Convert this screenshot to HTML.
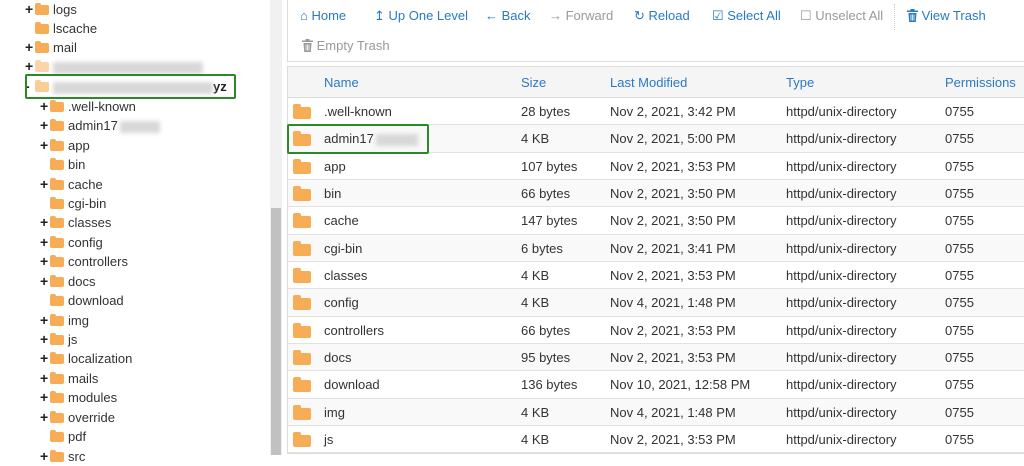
<!DOCTYPE html>
<html><head><meta charset="utf-8"><style>
*{margin:0;padding:0;box-sizing:border-box}
body{width:1024px;height:455px;overflow:hidden;background:#fff;font-family:"Liberation Sans",sans-serif;position:relative}
.tree{position:absolute;left:0;top:0;width:270px;height:455px;font-size:13px;color:#333}
.tr{position:absolute;height:19px;line-height:19px;white-space:nowrap}
.pl{display:inline-block;width:10px;font-weight:bold;font-size:14px;color:#222}
.fd{display:inline-block;width:14px;height:10px;background:#f6ad55;border-radius:2px;position:relative;vertical-align:-1px;margin-right:4px}
.fd:before{content:"";position:absolute;left:0;top:-2px;width:6px;height:4px;background:#f6ad55;border-radius:2px 2px 0 0}
.blur{display:inline-block;height:12px;background:#d8d8d8;filter:blur(2px);vertical-align:middle}
.sb{position:absolute;left:270px;top:0;width:12px;height:455px;background:#f1f1f1}
.th{position:absolute;left:271px;top:208px;width:10px;height:247px;background:#c1c1c1}
.tb{position:absolute;left:287px;top:0;width:740px;height:62px;border:1px solid #ddd;border-top:none;font-size:13px;color:#2a79c4}
.tb span{position:absolute;top:8px;white-space:nowrap}
.tb svg{vertical-align:-2px}
.dis{color:#999}
.tab{position:absolute;left:287px;top:66px;width:740px;border:1px solid #ddd;border-right:none;font-size:13px;color:#333}
.hd{height:31px;line-height:31px;background:#f5f5f5;border-bottom:1px solid #ddd;color:#2a79c4;position:relative}
.r{height:27.35px;line-height:27px;border-bottom:1px solid #e2e2e2;position:relative}
.r:nth-child(even){background:#f9f9f9}
.c{position:absolute;top:0;white-space:nowrap}
.bf{position:absolute;left:5px;top:9px;width:18px;height:12px;background:#f6ad55;border-radius:2px}
.bf:before{content:"";position:absolute;left:0;top:-3px;width:8px;height:4px;background:#f6ad55;border-radius:2px 2px 0 0}
</style></head><body>
<div class="tree">
<div class="tr" style="left:25px;top:0"><span class="pl">+</span><span class="fd"></span>logs</div>
<div class="tr" style="left:35px;top:19px"><span class="fd"></span>lscache</div>
<div class="tr" style="left:25px;top:38px"><span class="pl">+</span><span class="fd"></span>mail</div>
<div class="tr" style="left:25px;top:57px"><span class="pl">+</span><span class="fd" style="opacity:.5"></span><span class="blur" style="width:150px"></span></div>
<div class="tr" style="left:25px;top:77px"><span class="pl">-</span><span class="fd" style="opacity:.6"></span><span class="blur" style="width:160px"></span><b style="color:#222">yz</b></div>
<div style="position:absolute;left:25px;top:74px;width:211px;height:25px;border:2px solid #2a8a2a;border-radius:2px"></div>
<div class="tr" style="left:40px;top:97px"><span class="pl">+</span><span class="fd"></span>.well-known</div>
<div class="tr" style="left:40px;top:116px"><span class="pl">+</span><span class="fd"></span>admin17<span class="blur" style="width:40px;margin-left:2px"></span></div>
<div class="tr" style="left:40px;top:136px"><span class="pl">+</span><span class="fd"></span>app</div>
<div class="tr" style="left:50px;top:155px"><span class="fd"></span>bin</div>
<div class="tr" style="left:40px;top:175px"><span class="pl">+</span><span class="fd"></span>cache</div>
<div class="tr" style="left:50px;top:194px"><span class="fd"></span>cgi-bin</div>
<div class="tr" style="left:40px;top:213px"><span class="pl">+</span><span class="fd"></span>classes</div>
<div class="tr" style="left:40px;top:233px"><span class="pl">+</span><span class="fd"></span>config</div>
<div class="tr" style="left:40px;top:252px"><span class="pl">+</span><span class="fd"></span>controllers</div>
<div class="tr" style="left:40px;top:272px"><span class="pl">+</span><span class="fd"></span>docs</div>
<div class="tr" style="left:50px;top:291px"><span class="fd"></span>download</div>
<div class="tr" style="left:40px;top:311px"><span class="pl">+</span><span class="fd"></span>img</div>
<div class="tr" style="left:40px;top:330px"><span class="pl">+</span><span class="fd"></span>js</div>
<div class="tr" style="left:40px;top:349px"><span class="pl">+</span><span class="fd"></span>localization</div>
<div class="tr" style="left:40px;top:369px"><span class="pl">+</span><span class="fd"></span>mails</div>
<div class="tr" style="left:40px;top:388px"><span class="pl">+</span><span class="fd"></span>modules</div>
<div class="tr" style="left:40px;top:408px"><span class="pl">+</span><span class="fd"></span>override</div>
<div class="tr" style="left:50px;top:427px"><span class="fd"></span>pdf</div>
<div class="tr" style="left:40px;top:447px"><span class="pl">+</span><span class="fd"></span>src</div>
</div>
<div class="sb"></div><div class="th"></div>
<div class="tb">
<span style="left:12px">⌂ Home</span>
<span style="left:86px">↥ Up One Level</span>
<span style="left:197px">← Back</span>
<span style="left:261px" class="dis">→ Forward</span>
<span style="left:346px">↻ Reload</span>
<span style="left:424px">☑ Select All</span>
<span style="left:512px" class="dis">☐ Unselect All</span>
<span style="left:606px;top:4px;height:26px;border-left:1px dotted #ccc"></span>
<span style="left:619px"><svg width="11" height="13" viewBox="0 0 11 13"><rect x="0" y="1.5" width="11" height="1.5" fill="#2a79c4"/><rect x="3.5" y="0" width="4" height="2" fill="#2a79c4"/><path d="M1.5 4h8l-.7 9h-6.6z" fill="#2a79c4"/><path d="M4 5.5v6M5.5 5.5v6M7 5.5v6" stroke="#fff" stroke-width=".8"/></svg> View Trash</span>
<span style="left:14px;top:38px" class="dis"><svg width="11" height="13" viewBox="0 0 11 13"><rect x="0" y="1.5" width="11" height="1.5" fill="#999"/><rect x="3.5" y="0" width="4" height="2" fill="#999"/><path d="M1.5 4h8l-.7 9h-6.6z" fill="#999"/><path d="M4 5.5v6M5.5 5.5v6M7 5.5v6" stroke="#fff" stroke-width=".8"/></svg> Empty Trash</span>
</div>
<div class="tab">
<div class="hd"><span class="c" style="left:36px">Name</span><span class="c" style="left:233px">Size</span><span class="c" style="left:322px">Last Modified</span><span class="c" style="left:498px">Type</span><span class="c" style="left:657px">Permissions</span></div>
<div id="rows"></div>
</div>
<div style="position:absolute;left:287px;top:124px;width:142px;height:30px;border:2px solid #2a8a2a;border-radius:2px"></div>
<script>
var d=[[".well-known","28 bytes","Nov 2, 2021, 3:42 PM"],["admin17","4 KB","Nov 2, 2021, 5:00 PM"],["app","107 bytes","Nov 2, 2021, 3:53 PM"],["bin","66 bytes","Nov 2, 2021, 3:50 PM"],["cache","147 bytes","Nov 2, 2021, 3:50 PM"],["cgi-bin","6 bytes","Nov 2, 2021, 3:41 PM"],["classes","4 KB","Nov 2, 2021, 3:53 PM"],["config","4 KB","Nov 4, 2021, 1:48 PM"],["controllers","66 bytes","Nov 2, 2021, 3:53 PM"],["docs","95 bytes","Nov 2, 2021, 3:53 PM"],["download","136 bytes","Nov 10, 2021, 12:58 PM"],["img","4 KB","Nov 4, 2021, 1:48 PM"],["js","4 KB","Nov 2, 2021, 3:53 PM"]];
var h="";d.forEach(function(r,i){h+='<div class="r"><span class="bf"></span><span class="c" style="left:36px">'+r[0]+(i==1?'<span class="blur" style="width:42px;margin-left:2px"></span>':'')+'</span><span class="c" style="left:233px">'+r[1]+'</span><span class="c" style="left:322px">'+r[2]+'</span><span class="c" style="left:498px">httpd/unix-directory</span><span class="c" style="left:657px">0755</span></div>'});
document.getElementById("rows").innerHTML=h;
</script>
</body></html>
